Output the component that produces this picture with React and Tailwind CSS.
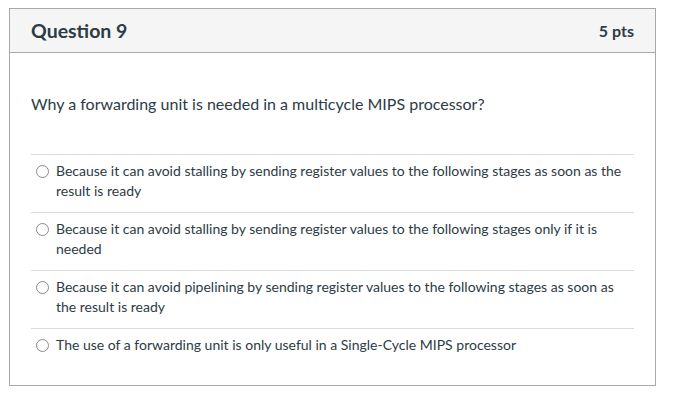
import React from "react";

const answers = [
  "Because it can avoid stalling by sending register values to the following stages as soon as the result is ready",
  "Because it can avoid stalling by sending register values to the following stages only if it is needed",
  "Because it can avoid pipelining by sending register values to the following stages as soon as the result is ready",
  "The use of a forwarding unit is only useful in a Single-Cycle MIPS processor",
];

function Answer({ text }) {
  return (
    <div className="flex items-start border-t border-[#dcdcdc] pt-[6px] pb-[11px]">
      <span className="mt-[4px] ml-[5px] mr-[7px] h-[13px] w-[13px] shrink-0 rounded-full border-[1.5px] border-[#8a8a8e] bg-white" />
      <p className="pr-[10px] text-[14px] leading-[20px] text-[#2d3b45]">{text}</p>
    </div>
  );
}

export default function App() {
  return (
    <div className="h-[404px] w-[674px] bg-white pl-[9px] pt-[8px]" style={{ fontFamily: "Lato, 'Noto Sans', sans-serif" }}>
      <div className="w-[647px] border border-[#a8a8a8]">
        <div className="flex h-[44px] items-center justify-between border-b border-[#a8a8a8] bg-[#f5f5f5] px-[21px]">
          <h2 className="text-[19.5px] font-bold text-[#2d3b45]">Question 9</h2>
          <span className="text-[16px] font-bold text-[#2d3b45]">5 pts</span>
        </div>
        <div className="px-[21px] pt-[41px] pb-[19px]">
          <p className="text-[16px] leading-[20px] text-[#2d3b45]">
            Why a forwarding unit is needed in a multicycle MIPS processor?
          </p>
          <div className="mt-[40px]">
            {answers.map((a, i) => (
              <Answer key={i} text={a} />
            ))}
          </div>
        </div>
      </div>
    </div>
  );
}
